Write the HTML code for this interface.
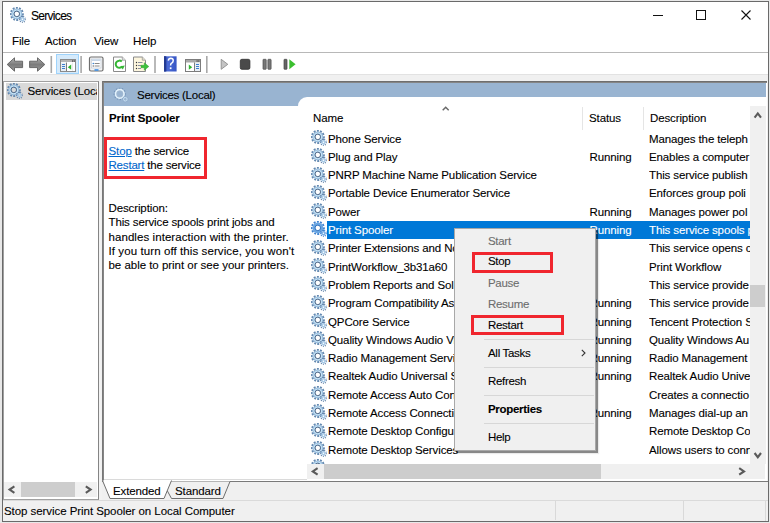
<!DOCTYPE html>
<html><head><meta charset="utf-8">
<style>
*{margin:0;padding:0;box-sizing:border-box}
html,body{width:770px;height:523px;overflow:hidden;background:#e8e8e8}
body{position:relative;font-family:"Liberation Sans",sans-serif;font-size:11.5px;letter-spacing:-0.12px;color:#000}
.a{position:absolute}
.t{position:absolute;white-space:nowrap;line-height:14px;height:14px;-webkit-text-stroke:0.1px currentColor}
svg{position:absolute;overflow:visible}
</style></head><body>
<svg width="0" height="0" style="position:absolute">
 <defs>
  <radialGradient id="gg" gradientUnits="userSpaceOnUse" cx="6.8" cy="6.9" r="5.4">
   <stop offset="0.5" stop-color="#8fb4d6"/><stop offset="0.7" stop-color="#c8e6f9"/><stop offset="1" stop-color="#7fa6cc"/>
  </radialGradient>
  <symbol id="gear" viewBox="0 0 16 16">
   <circle cx="6.8" cy="6.9" r="6.1" fill="none" stroke="#6489b0" stroke-width="1.9" stroke-dasharray="1.85 1.344" transform="rotate(15 6.8 6.9)"/>
   <circle cx="6.8" cy="6.9" r="4.05" fill="none" stroke="url(#gg)" stroke-width="2.7"/>
   <circle cx="6.8" cy="6.9" r="2.75" fill="none" stroke="#4f6888" stroke-width="1"/>
   <circle cx="12.4" cy="12.3" r="2.9" fill="none" stroke="#5f7fa6" stroke-width="1.4" stroke-dasharray="0.9 1.12"/>
   <circle cx="12.4" cy="12.3" r="1.55" fill="none" stroke="#a9cbe8" stroke-width="1.5"/>
  </symbol>
  <symbol id="gears" viewBox="0 0 16 16">
   <circle cx="6.8" cy="6.9" r="6.1" fill="none" stroke="#3f82cf" stroke-width="1.9" stroke-dasharray="1.85 1.344" transform="rotate(15 6.8 6.9)"/>
   <circle cx="6.8" cy="6.9" r="4.05" fill="none" stroke="#6aa6e2" stroke-width="2.7"/>
   <circle cx="6.8" cy="6.9" r="2.75" fill="none" stroke="#2566b5" stroke-width="0.9"/>
   <circle cx="12.4" cy="12.3" r="2.9" fill="none" stroke="#3f82cf" stroke-width="1.4" stroke-dasharray="0.9 1.12"/>
   <circle cx="12.4" cy="12.3" r="1.55" fill="none" stroke="#7ab0e6" stroke-width="1.5"/>
  </symbol>
  <symbol id="gearh" viewBox="0 0 16 16">
   <circle cx="6.8" cy="6.9" r="5.6" fill="none" stroke="#7393b8" stroke-width="1.3" stroke-dasharray="1.3 1.63" transform="rotate(15 6.8 6.9)"/>
   <circle cx="6.8" cy="6.9" r="4.2" fill="none" stroke="#e3f2fc" stroke-width="1.7"/>
   <circle cx="6.8" cy="6.9" r="3.1" fill="none" stroke="#a7bcd2" stroke-width="0.6"/>
   <circle cx="12.3" cy="12.2" r="2.6" fill="none" stroke="#8eabcb" stroke-width="1.2" stroke-dasharray="0.9 1.0"/>
   <circle cx="12.3" cy="12.2" r="1.8" fill="none" stroke="#c9e0f2" stroke-width="1"/>
  </symbol>
 </defs>
</svg>

<!-- window frame -->
<div class="a" style="left:2px;top:1px;width:767px;height:521px;border:1px solid #6a6a6a;background:#fff"></div>

<!-- title bar -->
<svg style="left:10px;top:7px" width="16" height="16"><use href="#gear"/></svg>
<div class="t" style="left:31px;top:9px;font-size:12px;letter-spacing:-0.7px">Services</div>
<div class="a" style="left:653px;top:15px;width:10px;height:1px;background:#111"></div>
<div class="a" style="left:696px;top:10px;width:10px;height:10px;border:1px solid #111"></div>
<svg style="left:741px;top:10px" width="10" height="10"><path d="M0.5 0.5L9.5 9.5M9.5 0.5L0.5 9.5" stroke="#111" stroke-width="1.1"/></svg>

<!-- menu bar -->
<div class="t" style="left:12px;top:34px">File</div>
<div class="t" style="left:45px;top:34px">Action</div>
<div class="t" style="left:94px;top:34px">View</div>
<div class="t" style="left:133px;top:34px">Help</div>
<div class="a" style="left:3px;top:52px;width:765px;height:1px;background:#b8b8b8"></div>


<!-- toolbar -->
<svg style="left:0;top:0" width="310" height="80" viewBox="0 0 310 80">
 <defs>
  <linearGradient id="ag" x1="0" y1="0" x2="0" y2="1"><stop offset="0" stop-color="#b4b4b4"/><stop offset="0.5" stop-color="#7c7c7c"/><stop offset="1" stop-color="#9a9a9a"/></linearGradient>
  <linearGradient id="hg" x1="0" y1="0" x2="1" y2="0"><stop offset="0" stop-color="#2a45a8"/><stop offset="0.3" stop-color="#4a6ad6"/><stop offset="1" stop-color="#3756c4"/></linearGradient>
 </defs>
 <!-- back -->
 <path d="M7.2 64.5L14.5 57.8V61.2H22.6V67.6H14.5V71.2Z" fill="url(#ag)" stroke="#5e5e5e" stroke-width="0.9" stroke-linejoin="round"/>
 <!-- forward -->
 <path d="M44.8 64.5L37.5 57.8V61.2H29.6V67.6H37.5V71.2Z" fill="url(#ag)" stroke="#5e5e5e" stroke-width="0.9" stroke-linejoin="round"/>
 <rect x="50.5" y="56" width="1.6" height="17" fill="#a8a8a8"/>
 <!-- pressed button -->
 <rect x="56.5" y="54.5" width="22" height="19" fill="#d5eafb" stroke="#9fd3fb" stroke-width="1"/>
 <rect x="60.5" y="59.5" width="15" height="12" fill="#fff" stroke="#8a8a8a" stroke-width="1"/>
 <rect x="61" y="60" width="14" height="2" fill="#b5b5b5"/>
 <rect x="72" y="60.3" width="1.2" height="1.5" fill="#555"/><rect x="73.7" y="60.3" width="1.2" height="1.5" fill="#555"/>
 <rect x="61" y="62.5" width="5" height="8.5" fill="#e8eef4"/>
 <line x1="66.5" y1="62.5" x2="66.5" y2="71" stroke="#7c7c7c" stroke-width="1"/>
 <rect x="62" y="64" width="3" height="1" fill="#3d7fd0"/><rect x="62" y="66" width="3" height="1" fill="#3d7fd0"/><rect x="62" y="68" width="3" height="1" fill="#3d7fd0"/>
 <path d="M67.8 67.2L71.2 64.6V69.8Z" fill="#2fb52f"/>
 <line x1="72.5" y1="62.5" x2="72.5" y2="71" stroke="#ddd" stroke-width="0.6"/>
 <rect x="80.3" y="56" width="1.6" height="17" fill="#a8a8a8"/>
 <!-- properties -->
 <rect x="89.5" y="57" width="13.5" height="14" rx="1.5" fill="#f4f4f4" stroke="#6f6f6f" stroke-width="1.2"/>
 <rect x="91.5" y="59" width="9.5" height="9" fill="#fff" stroke="#b9c4cf" stroke-width="0.6"/>
 <rect x="92" y="59.2" width="8.5" height="1.8" fill="#c7d6e6"/>
 <circle cx="93.3" cy="63.5" r="0.8" fill="#3a86d6"/><rect x="94.6" y="63" width="5" height="1" fill="#888"/>
 <circle cx="93.3" cy="66" r="0.8" fill="#777"/><rect x="94.6" y="65.5" width="5" height="1" fill="#888"/>
 <rect x="94.5" y="69.2" width="4" height="1.6" fill="#3a8ee6"/>
 <!-- refresh doc -->
 <path d="M113.5 57H122.3L125.5 60.2V71.5H113.5Z" fill="#fff" stroke="#8a8a8a" stroke-width="1"/>
 <path d="M122.3 57V60.2H125.5" fill="#e4e4e4" stroke="#9a9a9a" stroke-width="0.8"/>
 <path d="M122.2 66.4A3.6 3.6 0 1 1 121.8 61.6" fill="none" stroke="#35b635" stroke-width="2"/>
 <path d="M120.3 66.2L124.8 65.4L122.8 69.4Z" fill="#35b635"/>
 <!-- export doc -->
 <path d="M133.5 57H142.3L145.5 60.2V71.5H133.5Z" fill="#fdf6de" stroke="#8a8a8a" stroke-width="1"/>
 <path d="M142.3 57V60.2H145.5" fill="#e8e2cc" stroke="#9a9a9a" stroke-width="0.8"/>
 <circle cx="136.5" cy="62.5" r="0.7" fill="#333"/><rect x="138" y="62" width="4.5" height="1" fill="#8a8fa0"/>
 <circle cx="136.5" cy="65.5" r="0.7" fill="#333"/><rect x="138" y="65" width="3" height="1" fill="#8a8fa0"/>
 <circle cx="136.5" cy="68.5" r="0.7" fill="#333"/><rect x="138" y="68" width="3" height="1" fill="#8a8fa0"/>
 <path d="M141 65.3H144.3V62.8L148.8 66.5L144.3 70.2V67.7H141Z" fill="#3cc23c" stroke="#2e9e2e" stroke-width="0.5"/>
 <rect x="154.2" y="56" width="1.6" height="17" fill="#a8a8a8"/>
 <!-- help -->
 <rect x="164" y="56.3" width="12.6" height="15.2" fill="url(#hg)"/>
 <rect x="164" y="56.3" width="2.2" height="15.2" fill="#233a92"/>
 <path d="M168.3 60.6Q168.6 58.2 170.8 58.2Q173.3 58.3 173.2 60.7Q173.1 62.4 171.3 63.4Q170.6 63.9 170.6 65.6" fill="none" stroke="#fff" stroke-width="1.5"/>
 <rect x="169.8" y="67.3" width="1.7" height="1.8" fill="#fff"/>
 <!-- action pane -->
 <rect x="185.5" y="59.5" width="15" height="12" fill="#fff" stroke="#7c7c7c" stroke-width="1"/>
 <rect x="186" y="60" width="14" height="2.5" fill="#a9a9a9"/>
 <rect x="196.5" y="60.3" width="1.2" height="1.5" fill="#555"/><rect x="198.2" y="60.3" width="1.2" height="1.5" fill="#555"/>
 <rect x="195" y="62.5" width="5" height="8.5" fill="#e8eef4"/>
 <line x1="194.5" y1="62.5" x2="194.5" y2="71" stroke="#7c7c7c" stroke-width="1"/>
 <rect x="196" y="64" width="3" height="1" fill="#3d7fd0"/><rect x="196" y="66" width="3" height="1" fill="#3d7fd0"/><rect x="196" y="68" width="3" height="1" fill="#3d7fd0"/>
 <path d="M192.2 67.2L188.8 64.6V69.8Z" fill="#2fb52f"/>
 <rect x="206" y="56" width="1.6" height="17" fill="#a8a8a8"/>
 <!-- play disabled -->
 <path d="M221.2 59.3L227.8 64.3L221.2 69.3Z" fill="#c4c4c4" stroke="#8c8c8c" stroke-width="0.9" stroke-linejoin="round"/>
 <!-- stop -->
 <rect x="240.3" y="59.3" width="9.6" height="10" rx="1.6" fill="#4a4a4a" stroke="#2e2e2e" stroke-width="0.8"/>
 <!-- pause -->
 <rect x="263" y="59.3" width="3.2" height="10" rx="0.6" fill="#777" stroke="#4a4a4a" stroke-width="0.7"/>
 <rect x="267.9" y="59.3" width="3.2" height="10" rx="0.6" fill="#777" stroke="#4a4a4a" stroke-width="0.7"/>
 <!-- restart -->
 <rect x="284" y="59.3" width="3" height="10" rx="0.6" fill="#666" stroke="#444" stroke-width="0.7"/>
 <path d="M289.3 59.3L295.6 64.3L289.3 69.3Z" fill="#3bbf2f"/>
</svg>

<!-- toolbar strip -->
<div class="a" style="left:3px;top:74px;width:765px;height:7px;background:#f0f0f0;border-top:1px solid #e2e2e2"></div>

<!-- left pane -->
<div class="a" style="left:99px;top:81px;width:4px;height:419px;background:#f2f2f2"></div>
<div class="a" style="left:3px;top:81px;width:96px;height:419px;border:1px solid #a0a0a0;border-right-color:#858585;background:#fff"></div>
<div class="a" style="left:6px;top:83px;width:91px;height:17px;background:#d9d9d9"></div>
<svg style="left:7px;top:83px" width="16" height="16"><use href="#gear"/></svg>
<div class="a" style="left:27.5px;top:83px;width:69.5px;height:17px;overflow:hidden"><div class="t" style="left:0;top:1px">Services (Local)</div></div>
<!-- left pane h scroll -->
<div class="a" style="left:4px;top:482px;width:93px;height:15px;background:#f0f0f0"></div>
<div class="a" style="left:21px;top:482px;width:54px;height:15px;background:#cdcdcd"></div>

<!-- right pane frame -->
<div class="a" style="left:101px;top:80px;width:667px;height:401px;background:#f0f0f0"></div>
<div class="a" style="left:102px;top:81px;width:665px;height:400px;border-top:2px solid #858585;border-left:2px solid #858585;background:#fff"></div>
<div class="a" style="left:102px;top:81px;width:665px;height:1px;background:#6e6e6e"></div>
<div class="a" style="left:102px;top:81px;width:1px;height:399px;background:#777"></div>
<div class="a" style="left:102px;top:481px;width:666px;height:1px;background:#7a7a7a"></div>

<!-- blue header -->
<div class="a" style="left:104px;top:83px;width:662px;height:14px;background:#99b4d1"></div>
<div class="a" style="left:104px;top:97px;width:210px;height:9px;background:#99b4d1"></div>
<div class="a" style="left:298px;top:97px;width:40px;height:20px;background:#fff;border-top-left-radius:9px"></div>
<svg style="left:113px;top:87px" width="16" height="16"><use href="#gearh"/></svg>
<div class="t" style="left:137px;top:88px;letter-spacing:-0.25px">Services (Local)</div>

<!-- extended panel -->
<div class="t" style="left:109px;top:111px;font-weight:bold">Print Spooler</div>
<div class="a" style="left:104px;top:137px;width:103px;height:42px;border:3px solid #f0262e"></div>
<div class="t" style="left:108.5px;top:144px"><span style="color:#0066cc;text-decoration:underline">Stop</span> the service</div>
<div class="t" style="left:108.5px;top:158px;letter-spacing:-0.19px"><span style="color:#0066cc;text-decoration:underline">Restart</span> the service</div>
<div class="t" style="left:108.5px;top:201px">Description:</div>
<div class="t" style="left:108.5px;top:215px">This service spools print jobs and</div>
<div class="t" style="left:108.5px;top:230px;letter-spacing:0.07px">handles interaction with the printer.</div>
<div class="t" style="left:108.5px;top:244px;letter-spacing:0.09px">If you turn off this service, you won't</div>
<div class="t" style="left:108.5px;top:258px;letter-spacing:-0.03px">be able to print or see your printers.</div>

<!-- list header -->
<svg style="left:442px;top:106px" width="8" height="5"><path d="M0.7 4.2L3.7 1.2L6.7 4.2" fill="none" stroke="#6a6a6a" stroke-width="1.5"/></svg>
<div class="t" style="left:313px;top:111px">Name</div>
<div class="a" style="left:582px;top:107px;width:1px;height:23px;background:#e5e5e5"></div>
<div class="t" style="left:589px;top:111px">Status</div>
<div class="a" style="left:643px;top:107px;width:1px;height:23px;background:#e5e5e5"></div>
<div class="t" style="left:650px;top:111px">Description</div>

<div id="rows"><div class="a" style="left:307px;top:130px;width:443px;height:334px;overflow:hidden">
<svg style="left:4px;top:0.00px" width="16" height="16"><use href="#gear"/></svg>
<div class="a" style="left:21px;top:1.60px;width:255px;height:16px;overflow:hidden"><div class="t" style="left:0;top:0;color:#000">Phone Service</div></div>
<div class="a" style="left:342px;top:1.60px;width:101px;height:16px;overflow:hidden"><div class="t" style="left:0;top:0;color:#000">Manages the teleph</div></div>
<svg style="left:4px;top:18.29px" width="16" height="16"><use href="#gear"/></svg>
<div class="a" style="left:21px;top:19.89px;width:255px;height:16px;overflow:hidden"><div class="t" style="left:0;top:0;color:#000">Plug and Play</div></div>
<div class="t" style="left:282.5px;top:19.89px;color:#000">Running</div>
<div class="a" style="left:342px;top:19.89px;width:101px;height:16px;overflow:hidden"><div class="t" style="left:0;top:0;color:#000">Enables a computer</div></div>
<svg style="left:4px;top:36.58px" width="16" height="16"><use href="#gear"/></svg>
<div class="a" style="left:21px;top:38.18px;width:255px;height:16px;overflow:hidden"><div class="t" style="left:0;top:0;color:#000">PNRP Machine Name Publication Service</div></div>
<div class="a" style="left:342px;top:38.18px;width:101px;height:16px;overflow:hidden"><div class="t" style="left:0;top:0;color:#000">This service publish</div></div>
<svg style="left:4px;top:54.87px" width="16" height="16"><use href="#gear"/></svg>
<div class="a" style="left:21px;top:56.47px;width:255px;height:16px;overflow:hidden"><div class="t" style="left:0;top:0;color:#000">Portable Device Enumerator Service</div></div>
<div class="a" style="left:342px;top:56.47px;width:101px;height:16px;overflow:hidden"><div class="t" style="left:0;top:0;color:#000">Enforces group poli</div></div>
<svg style="left:4px;top:73.16px" width="16" height="16"><use href="#gear"/></svg>
<div class="a" style="left:21px;top:74.76px;width:255px;height:16px;overflow:hidden"><div class="t" style="left:0;top:0;color:#000">Power</div></div>
<div class="t" style="left:282.5px;top:74.76px;color:#000">Running</div>
<div class="a" style="left:342px;top:74.76px;width:101px;height:16px;overflow:hidden"><div class="t" style="left:0;top:0;color:#000">Manages power pol</div></div>
<div class="a" style="left:20px;top:90.80px;width:423px;height:18px;background:#0078d7"></div>
<svg style="left:4px;top:91.45px" width="16" height="16"><use href="#gears"/></svg>
<div class="a" style="left:21px;top:93.05px;width:255px;height:16px;overflow:hidden"><div class="t" style="left:0;top:0;color:#fff">Print Spooler</div></div>
<div class="t" style="left:282.5px;top:93.05px;color:#fff">Running</div>
<div class="a" style="left:342px;top:93.05px;width:101px;height:16px;overflow:hidden"><div class="t" style="left:0;top:0;color:#fff">This service spools p</div></div>
<svg style="left:4px;top:109.74px" width="16" height="16"><use href="#gear"/></svg>
<div class="a" style="left:21px;top:111.34px;width:255px;height:16px;overflow:hidden"><div class="t" style="left:0;top:0;color:#000">Printer Extensions and Notifications</div></div>
<div class="a" style="left:342px;top:111.34px;width:101px;height:16px;overflow:hidden"><div class="t" style="left:0;top:0;color:#000">This service opens c</div></div>
<svg style="left:4px;top:128.03px" width="16" height="16"><use href="#gear"/></svg>
<div class="a" style="left:21px;top:129.63px;width:255px;height:16px;overflow:hidden"><div class="t" style="left:0;top:0;color:#000">PrintWorkflow_3b31a60</div></div>
<div class="a" style="left:342px;top:129.63px;width:101px;height:16px;overflow:hidden"><div class="t" style="left:0;top:0;color:#000">Print Workflow</div></div>
<svg style="left:4px;top:146.32px" width="16" height="16"><use href="#gear"/></svg>
<div class="a" style="left:21px;top:147.92px;width:255px;height:16px;overflow:hidden"><div class="t" style="left:0;top:0;color:#000">Problem Reports and Solutions Control Panel Support</div></div>
<div class="a" style="left:342px;top:147.92px;width:101px;height:16px;overflow:hidden"><div class="t" style="left:0;top:0;color:#000">This service provide</div></div>
<svg style="left:4px;top:164.61px" width="16" height="16"><use href="#gear"/></svg>
<div class="a" style="left:21px;top:166.21px;width:255px;height:16px;overflow:hidden"><div class="t" style="left:0;top:0;color:#000">Program Compatibility Assistant Service</div></div>
<div class="t" style="left:282.5px;top:166.21px;color:#000">Running</div>
<div class="a" style="left:342px;top:166.21px;width:101px;height:16px;overflow:hidden"><div class="t" style="left:0;top:0;color:#000">This service provide</div></div>
<svg style="left:4px;top:182.90px" width="16" height="16"><use href="#gear"/></svg>
<div class="a" style="left:21px;top:184.50px;width:255px;height:16px;overflow:hidden"><div class="t" style="left:0;top:0;color:#000">QPCore Service</div></div>
<div class="t" style="left:282.5px;top:184.50px;color:#000">Running</div>
<div class="a" style="left:342px;top:184.50px;width:101px;height:16px;overflow:hidden"><div class="t" style="left:0;top:0;color:#000">Tencent Protection S</div></div>
<svg style="left:4px;top:201.19px" width="16" height="16"><use href="#gear"/></svg>
<div class="a" style="left:21px;top:202.79px;width:255px;height:16px;overflow:hidden"><div class="t" style="left:0;top:0;color:#000">Quality Windows Audio Video Experience</div></div>
<div class="t" style="left:282.5px;top:202.79px;color:#000">Running</div>
<div class="a" style="left:342px;top:202.79px;width:101px;height:16px;overflow:hidden"><div class="t" style="left:0;top:0;color:#000">Quality Windows Au</div></div>
<svg style="left:4px;top:219.48px" width="16" height="16"><use href="#gear"/></svg>
<div class="a" style="left:21px;top:221.08px;width:255px;height:16px;overflow:hidden"><div class="t" style="left:0;top:0;color:#000">Radio Management Service</div></div>
<div class="t" style="left:282.5px;top:221.08px;color:#000">Running</div>
<div class="a" style="left:342px;top:221.08px;width:101px;height:16px;overflow:hidden"><div class="t" style="left:0;top:0;color:#000">Radio Management</div></div>
<svg style="left:4px;top:237.77px" width="16" height="16"><use href="#gear"/></svg>
<div class="a" style="left:21px;top:239.37px;width:255px;height:16px;overflow:hidden"><div class="t" style="left:0;top:0;color:#000">Realtek Audio Universal Service</div></div>
<div class="t" style="left:282.5px;top:239.37px;color:#000">Running</div>
<div class="a" style="left:342px;top:239.37px;width:101px;height:16px;overflow:hidden"><div class="t" style="left:0;top:0;color:#000">Realtek Audio Unive</div></div>
<svg style="left:4px;top:256.06px" width="16" height="16"><use href="#gear"/></svg>
<div class="a" style="left:21px;top:257.66px;width:255px;height:16px;overflow:hidden"><div class="t" style="left:0;top:0;color:#000">Remote Access Auto Connection Manager</div></div>
<div class="a" style="left:342px;top:257.66px;width:101px;height:16px;overflow:hidden"><div class="t" style="left:0;top:0;color:#000">Creates a connectio</div></div>
<svg style="left:4px;top:274.35px" width="16" height="16"><use href="#gear"/></svg>
<div class="a" style="left:21px;top:275.95px;width:255px;height:16px;overflow:hidden"><div class="t" style="left:0;top:0;color:#000">Remote Access Connection Manager</div></div>
<div class="t" style="left:282.5px;top:275.95px;color:#000">Running</div>
<div class="a" style="left:342px;top:275.95px;width:101px;height:16px;overflow:hidden"><div class="t" style="left:0;top:0;color:#000">Manages dial-up an</div></div>
<svg style="left:4px;top:292.64px" width="16" height="16"><use href="#gear"/></svg>
<div class="a" style="left:21px;top:294.24px;width:255px;height:16px;overflow:hidden"><div class="t" style="left:0;top:0;color:#000">Remote Desktop Configuration</div></div>
<div class="a" style="left:342px;top:294.24px;width:101px;height:16px;overflow:hidden"><div class="t" style="left:0;top:0;color:#000">Remote Desktop Co</div></div>
<svg style="left:4px;top:310.93px" width="16" height="16"><use href="#gear"/></svg>
<div class="a" style="left:21px;top:312.53px;width:255px;height:16px;overflow:hidden"><div class="t" style="left:0;top:0;color:#000">Remote Desktop Services</div></div>
<div class="a" style="left:342px;top:312.53px;width:101px;height:16px;overflow:hidden"><div class="t" style="left:0;top:0;color:#000">Allows users to conn</div></div>
<svg style="left:4px;top:329.22px" width="16" height="16"><use href="#gear"/></svg>
</div></div><!--endrows-->

<!-- vertical scrollbar -->
<div class="a" style="left:750px;top:106px;width:16px;height:358px;background:#f0f0f0"></div>

<div class="a" style="left:750px;top:285px;width:15px;height:22px;background:#cdcdcd"></div>

<!-- horizontal scrollbar -->
<div class="a" style="left:307px;top:464px;width:458px;height:15px;background:#f0f0f0"></div>
<div class="a" style="left:324px;top:464px;width:277px;height:15px;background:#cdcdcd"></div>




<!-- context menu -->
<div class="a" style="left:454px;top:228px;width:142px;height:223px;background:#f0f0f0;border:1px solid #a8a8a8;box-shadow:2px 2px 0 rgba(0,0,0,0.42),3px 3px 1px rgba(0,0,0,0.08)"></div>
<div class="t" style="left:488px;letter-spacing:-0.3px;top:234px;color:#6d6d6d">Start</div>
<div class="t" style="left:488px;letter-spacing:-0.3px;top:254px">Stop</div>
<div class="t" style="left:488px;letter-spacing:-0.3px;top:276px;color:#6d6d6d">Pause</div>
<div class="t" style="left:488px;letter-spacing:-0.3px;top:297px;color:#6d6d6d">Resume</div>
<div class="t" style="left:488px;letter-spacing:-0.3px;top:318px">Restart</div>
<div class="a" style="left:484px;top:339px;width:110px;height:1px;background:#d7d7d7"></div>
<div class="t" style="left:488px;letter-spacing:-0.3px;top:346px">All Tasks</div>
<svg style="left:581px;top:349px" width="5" height="8"><path d="M0.8 0.8L4 4L0.8 7.2" fill="none" stroke="#333" stroke-width="1.1"/></svg>
<div class="a" style="left:484px;top:367px;width:110px;height:1px;background:#d7d7d7"></div>
<div class="t" style="left:488px;letter-spacing:-0.3px;top:374px">Refresh</div>
<div class="a" style="left:484px;top:395px;width:110px;height:1px;background:#d7d7d7"></div>
<div class="t" style="left:488px;letter-spacing:-0.3px;top:402px;font-weight:bold">Properties</div>
<div class="a" style="left:484px;top:423px;width:110px;height:1px;background:#d7d7d7"></div>
<div class="t" style="left:488px;letter-spacing:-0.3px;top:430px">Help</div>
<div class="a" style="left:472px;top:252px;width:81px;height:21px;border:3px solid #f0262e"></div>
<div class="a" style="left:471px;top:315px;width:93px;height:20px;border:3px solid #f0262e"></div>

<!-- tabs strip -->
<div class="a" style="left:102px;top:482px;width:666px;height:18px;background:#f0f0f0"></div>


<!-- tabs -->
<svg style="left:0;top:470px" width="300" height="35" viewBox="0 470 300 35">
 <path d="M170.5 481.5L166.6 489.5L171.5 498.5H223L230 481.5" fill="#f0f0f0" stroke="#6e6e6e" stroke-width="1"/>
 <path d="M102.5 480.5L110 498.5H164L171.5 480.5" fill="#fff" stroke="#6e6e6e" stroke-width="1"/>
</svg>
<div class="a" style="left:104px;top:479px;width:203px;height:1px;background:#dadada"></div>
<div class="t" style="left:113px;top:484px">Extended</div>
<div class="t" style="left:175px;top:484px">Standard</div>
<!-- left pane scroll arrows -->




<!-- scroll arrows -->
<svg style="left:0;top:0" width="770" height="523" viewBox="0 0 770 523">
 <g fill="none" stroke="#5a5a5a" stroke-width="2.1" stroke-linejoin="miter">
  <path d="M14.4 486.4L9.6 489.6L14.4 492.8"/>
  <path d="M85.8 486.4L90.6 489.6L85.8 492.8"/>
  <path d="M317.6 468.2L312.8 471.4L317.6 474.6"/>
  <path d="M739.2 468.2L744 471.4L739.2 474.6"/>
  <path d="M754.6 117.6L757.8 113.4L761 117.6"/>
  <path d="M754.6 453L757.8 457.2L761 453"/>
 </g>
</svg>

<!-- status bar -->
<div class="a" style="left:3px;top:500px;width:765px;height:1px;background:#dadada"></div>
<div class="a" style="left:3px;top:501px;width:765px;height:20px;background:#f0f0f0"></div>
<div class="a" style="left:555px;top:501px;width:1px;height:19px;background:#d9d9d9"></div>
<div class="a" style="left:683px;top:501px;width:1px;height:19px;background:#d9d9d9"></div>
<div class="a" style="left:765px;top:501px;width:1px;height:20px;background:#d9d9d9"></div>
<div class="t" style="left:4px;top:504px;letter-spacing:-0.06px">Stop service Print Spooler on Local Computer</div>

</body></html>
